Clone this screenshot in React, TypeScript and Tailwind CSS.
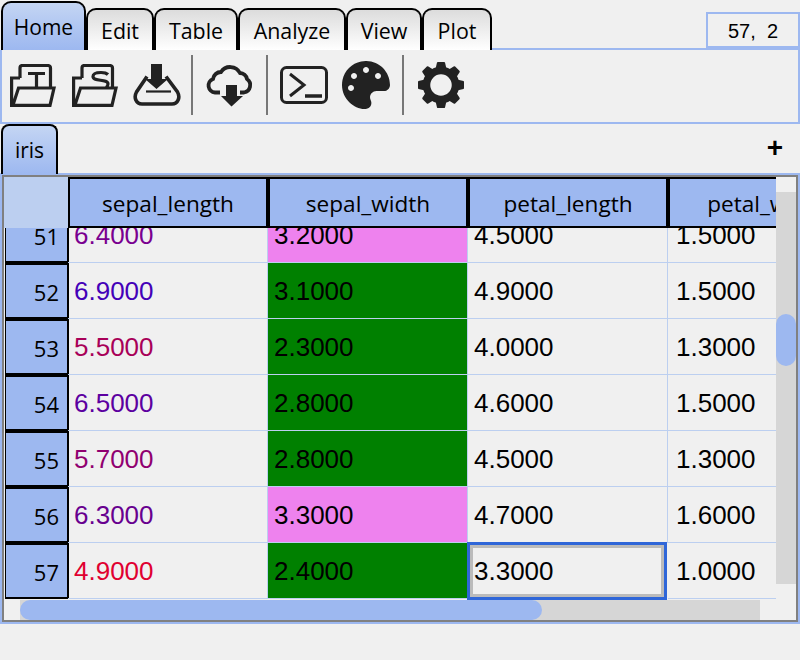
import { FaPalette } from "react-icons/fa";

const tabs = [
  { label: "Edit", w: "w-[68px]" },
  { label: "Table", w: "w-[84px]" },
  { label: "Analyze", w: "w-[108px]" },
  { label: "View", w: "w-[76px]" },
  { label: "Plot", w: "w-[70px]" },
];

const rows = [
  { id: 51, c: ["6.4000", "3.2000", "4.5000", "1.5000"], color: "text-[#7a0090]", bg: "bg-[#ee82ee]" },
  { id: 52, c: ["6.9000", "3.1000", "4.9000", "1.5000"], color: "text-[#4400b8]", bg: "bg-[#008000]" },
  { id: 53, c: ["5.5000", "2.3000", "4.0000", "1.3000"], color: "text-[#a80058]", bg: "bg-[#008000]" },
  { id: 54, c: ["6.5000", "2.8000", "4.6000", "1.5000"], color: "text-[#5c00a0]", bg: "bg-[#008000]" },
  { id: 55, c: ["5.7000", "2.8000", "4.5000", "1.3000"], color: "text-[#900070]", bg: "bg-[#008000]" },
  { id: 56, c: ["6.3000", "3.3000", "4.7000", "1.6000"], color: "text-[#68008f]", bg: "bg-[#ee82ee]" },
  { id: 57, c: ["4.9000", "2.4000", "3.3000", "1.0000"], color: "text-[#e00030]", bg: "bg-[#008000]" },
];

function FolderIcon({ letter }: { letter: "T" | "S" }) {
  return (
    <svg viewBox="0 0 46 43" className="w-[46px] h-[43px]" fill="none" stroke="#222" strokeWidth="3.2">
      <path d="M10 14V4a2.500 2.500 0 0 1 2.500-2.500H38A2.500 2.500 0 0 1 40.500 4v19" />
      <path d="M10 14H1.600v27.400H40L44 24H8.500L3 41" />
      {letter === "T" ? (
        <path d="M18 9.500h17M26.500 9.500V23" />
      ) : (
        <path d="M36 10.500c-1.500-1.500-3.500-2-7-2-4 0-8 1-8 4 0 5.500 15 2 15 7.500 0 1.500-.5 2.500-2 3.500" />
      )}
    </svg>
  );
}

function SaveIcon() {
  return (
    <svg viewBox="0 0 48 44" className="w-[48px] h-[44px]" fill="none">
      <path
        d="M14 13.500 3.500 29c-3 5.500-.5 12 5.500 12h30c6 0 8.500-6.500 5.500-12L33 13.500"
        stroke="#222"
        strokeWidth="3.600"
      />
      <path d="M18 1h11v15h6L23.500 26 12 16h6z" fill="#222" />
      <path d="M13 28.500h25" stroke="#222" strokeWidth="2.200" />
    </svg>
  );
}

function CloudIcon() {
  return (
    <svg viewBox="0 0 48 44" className="w-[48px] h-[44px]" fill="none">
      <path
        d="M14 29.500H9A7 7 0 0 1 7 16A8 8 0 0 1 15 9A11 11 0 0 1 34 10A7.500 7.500 0 0 1 41 16A7.500 7.500 0 0 1 38 29.500H34"
        stroke="#222"
        strokeWidth="3.800"
      />
      <path d="M20 22h11v11h6L25.500 43.500 15 33h5z" fill="#222" />
    </svg>
  );
}

function TerminalIcon() {
  return (
    <svg viewBox="0 0 48 38" className="w-[48px] h-[38px]" fill="none" stroke="#222">
      <rect x="1.500" y="1.500" width="45" height="35" rx="5" strokeWidth="3" />
      <path d="M10 8l14 11-14 11" strokeWidth="3" />
      <path d="M25 30h17" strokeWidth="3.500" />
    </svg>
  );
}

function GearIcon() {
  return (
    <svg viewBox="0 0 48 48" className="w-[48px] h-[48px]" fill="none">
      <circle cx="24" cy="24" r="14.500" stroke="#222" strokeWidth="7.500" />
      {[0, 45, 90, 135, 180, 225, 270, 315].map((a) => (
        <path key={a} d="M18.500 8 20 1.500a1 1 0 0 1 1-.5h6a1 1 0 0 1 1 .5L29.500 8z" fill="#222" transform={`rotate(${a} 24 24)`} />
      ))}
    </svg>
  );
}

function Sep() {
  return <div className="w-[2px] h-[60px] bg-[#777]" />;
}

function HeaderCell({ label }: { label: string }) {
  return (
    <div className="w-[200px] h-[51px] shrink-0 bg-[#9db8f0] border-2 border-black flex items-end justify-center pb-[7px] text-[22.6px] leading-[30px] text-black whitespace-nowrap">
      {label}
    </div>
  );
}

export default function App() {
  return (
    <div className="w-[800px] h-[660px] bg-[#f0f0f0] overflow-hidden font-['Open_Sans','Noto_Sans',sans-serif] text-black">
      {/* ribbon tabs */}
      <div className="h-[50px] flex items-end pl-px relative">
        <div className="w-[85px] h-[49px] bg-gradient-to-b from-[#c4d5f3] to-[#9db8f0] border-x-2 border-t-2 border-black rounded-t-[10px] flex items-start justify-center pt-[9px] text-[21px] leading-[30px]">
          Home
        </div>
        {tabs.map((t) => (
          <div
            key={t.label}
            className={`${t.w} h-[42px] bg-gradient-to-b from-[#dcdcdc] to-white border-x-2 border-t-2 border-black rounded-t-[10px] flex items-start justify-center pt-[6px] text-[21.4px] leading-[30px]`}
          >
            {t.label}
          </div>
        ))}
        <div className="flex-1 h-[2px] bg-[#9db8f0]" />
        <div className="absolute right-0 top-[12px] w-[94px] h-[36px] border-2 border-[#9db8f0] flex items-center justify-center pt-px font-['Liberation_Sans',sans-serif] text-[20px] whitespace-pre">
          57,  2
        </div>
        <div className="absolute right-0 top-[48px] w-[94px] h-[2px] bg-[#9db8f0]" />
      </div>

      {/* toolbar */}
      <div className="h-[74px] border-x-2 border-b-2 border-x-[#9db8f0] border-b-[#9db8f0] flex items-center pl-[8px] pb-[2px]">
        <FolderIcon letter="T" />
        <div className="ml-[16px]"><FolderIcon letter="S" /></div>
        <div className="ml-[15px]"><SaveIcon /></div>
        <div className="ml-[10px]"><Sep /></div>
        <div className="ml-[13px]"><CloudIcon /></div>
        <div className="ml-[12px]"><Sep /></div>
        <div className="ml-[12px]"><TerminalIcon /></div>
        <div className="ml-[14px]"><FaPalette size={48} color="#222" /></div>
        <div className="ml-[12px]"><Sep /></div>
        <div className="ml-[13px]"><GearIcon /></div>
      </div>

      {/* sheet tabs */}
      <div className="h-[49px] flex items-end justify-between pl-px pr-[17px]">
        <div className="w-[57px] h-[50px] -mb-px relative z-10 bg-gradient-to-b from-[#c4d5f3] to-[#9db8f0] border-x-2 border-t-2 border-black rounded-t-[8px] flex items-center justify-center pt-[2px] text-[21px]">
          iris
        </div>
        <div className="text-[28px] leading-[28px] font-semibold font-['Liberation_Sans',sans-serif] mb-[11px]">+</div>
      </div>

      {/* table */}
      <div className="w-[800px] h-[451px] border-2 border-[#9db8f0]">
        <div className="w-full h-full border-2 border-[#808080] grid grid-cols-[772px_20px] grid-rows-[423px_20px] bg-[#f0f0f0]">
          <div className="overflow-hidden flex flex-col bg-[#f0f0f0]">
            <div className="flex shrink-0 relative z-10">
              <div className="w-[64px] h-[51px] shrink-0 bg-[#bccff0]" />
              <HeaderCell label="sepal_length" />
              <HeaderCell label="sepal_width" />
              <HeaderCell label="petal_length" />
              <HeaderCell label="petal_width" />
            </div>
            <div className="overflow-hidden flex-1">
              <div className="-mt-[21px]">
                {rows.map((r) => (
                  <div key={r.id} className="flex h-[56px] font-['Liberation_Sans',sans-serif] text-[26px]">
                    <div className="w-[64px] shrink-0 border-2 border-l-[1px] ml-px -mr-px border-black bg-[#9db8f0] flex items-center justify-end pr-[8px] pt-[3px] font-['Open_Sans',sans-serif] text-[22px]">
                      {r.id}
                    </div>
                    <div className={`w-[200px] shrink-0 border-r border-b border-[#bccff0] pl-[6px] pt-[2px] flex items-center ${r.color}`}>
                      {r.c[0]}
                    </div>
                    <div className={`w-[200px] shrink-0 border-r border-b border-[#bccff0] pl-[6px] pt-[2px] flex items-center ${r.bg}`}>
                      {r.c[1]}
                    </div>
                    {r.id === 57 ? (
                      <div className="w-[200px] h-[58px] shrink-0 border-[3px] border-[#2f66d8] bg-[#bbb] p-[3px] -mt-[1px] -ml-[1px] mr-[1px]">
                        <div className="w-full h-full bg-[#f0f0f0] flex items-center pl-[1px]">{r.c[2]}</div>
                      </div>
                    ) : (
                      <div className="w-[200px] shrink-0 border-r border-b border-[#bccff0] pl-[6px] pt-[2px] flex items-center">
                        {r.c[2]}
                      </div>
                    )}
                    <div className="w-[200px] shrink-0 border-r border-b border-[#bccff0] pl-[8px] pt-[2px] flex items-center">
                      {r.c[3]}
                    </div>
                  </div>
                ))}
              </div>
            </div>
          </div>

          {/* vertical scrollbar */}
          <div className="pt-[15px] flex flex-col">
            <div className="h-[392px] bg-[#d6d6d6] pt-[122px]">
              <div className="h-[52px] rounded-[10px] bg-[#9db8f0]" />
            </div>
          </div>

          {/* horizontal scrollbar */}
          <div className="pl-[16px] flex">
            <div className="w-[740px] h-[20px] bg-[#d6d6d6]">
              <div className="w-[522px] h-[20px] rounded-[10px] bg-[#9db8f0]" />
            </div>
          </div>
          <div />
        </div>
      </div>
    </div>
  );
}
